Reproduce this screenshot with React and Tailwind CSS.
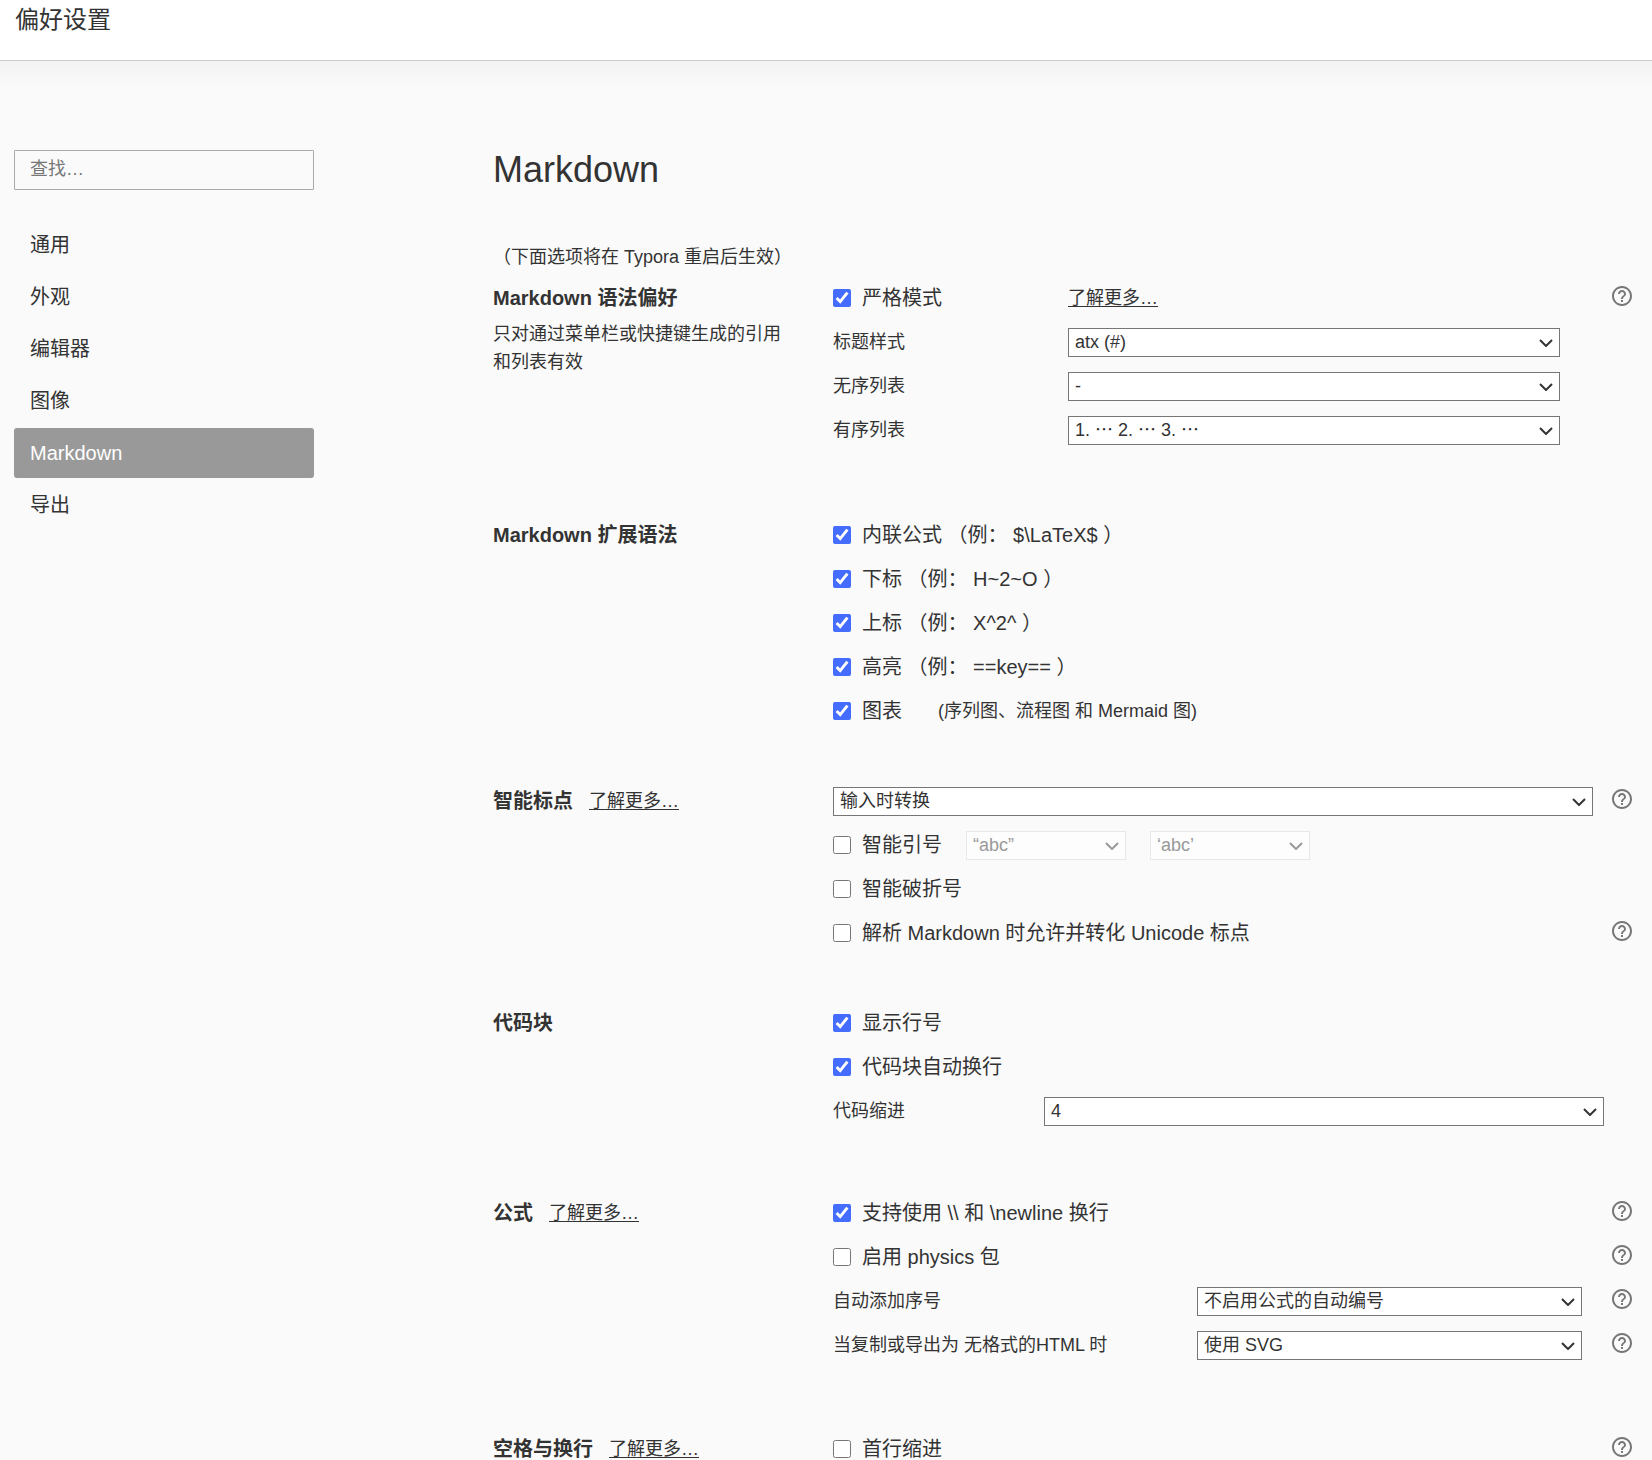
import React, { useState } from 'react';
import { MdHelpOutline } from 'react-icons/md';

const MENU = ['通用', '外观', '编辑器', '图像', 'Markdown', '导出'];

const HelpButton = ({ topic }) => (
  <button type="button" aria-label={`帮助：${topic}`} className="shrink-0 pb-1 text-[#777]">
    <MdHelpOutline className="size-6" />
  </button>
);

const MoreLink = () => (
  <a href="#more" className="text-[18px] font-normal underline underline-offset-2">了解更多…</a>
);

const Select = ({ id, label, options, disabled, className }) => (
  <div className={`relative ${className}`}>
    <select
      id={id}
      aria-label={label}
      disabled={disabled}
      className="block h-[29px] w-full appearance-none border border-[#767676] bg-white pb-px pl-1.5 pr-7 text-[18px] leading-[26px] text-[#333] disabled:border-[#e8e8e8] disabled:bg-[#fdfdfd] disabled:text-[#999]"
    >
      {options.map((o) => <option key={o}>{o}</option>)}
    </select>
    <svg
      viewBox="0 0 14 8"
      className={`pointer-events-none absolute right-[7px] top-[11px] h-2 w-3.5 ${disabled ? 'text-[#999]' : 'text-[#333]'}`}
    >
      <path d="M1 1l6 6 6-6" fill="none" stroke="currentColor" strokeWidth="2" />
    </svg>
  </div>
);

// Checkbox with its label, anything after it stays on the same line
const CheckRow = ({ id, label, checked = false, help, children }) => {
  const [on, setOn] = useState(checked);
  return (
    <div className="flex h-11 items-center">
      <input
        id={id}
        type="checkbox"
        checked={on}
        onChange={(e) => setOn(e.target.checked)}
        className="size-[18px] shrink-0 accent-[#446dff]"
      />
      <label htmlFor={id} className="ml-[11px] whitespace-nowrap text-[20px]">{label}</label>
      {children}
      {help && <div className="ml-auto flex"><HelpButton topic={label} /></div>}
    </div>
  );
};

const SelectRow = ({ id, label, labelWidth, selectClass, options, help }) => (
  <div className="flex h-11 items-center">
    <label htmlFor={id} className={`shrink-0 whitespace-nowrap text-[18px] ${labelWidth}`}>{label}</label>
    <Select id={id} options={options} className={`flex-1 ${selectClass}`} />
    {help && <HelpButton topic={label} />}
  </div>
);

const Section = ({ title, more, note, className = '', children }) => (
  <section className={`flex ${className}`}>
    <div className="w-[340px] shrink-0">
      <div className="flex h-11 items-center gap-4">
        <h2 className="text-[20px] font-bold">{title}</h2>
        {more && <MoreLink />}
      </div>
      {note && <p className="w-[300px] text-[18px] leading-7">{note}</p>}
    </div>
    <div className="min-w-0 flex-1">{children}</div>
  </section>
);

const Sidebar = () => {
  const [active, setActive] = useState('Markdown');
  return (
    <aside className="w-[300px] shrink-0">
      <input
        type="search"
        aria-label="查找"
        placeholder="查找…"
        className="block h-10 w-full rounded-[1px] border border-[#aaa] bg-transparent px-[15px] pb-px text-[18px] placeholder:text-[#777]"
      />
      <nav className="mt-[30px] flex flex-col gap-0.5">
        {MENU.map((item) => (
          <button
            key={item}
            type="button"
            onClick={() => setActive(item)}
            className={`h-[50px] rounded-[3px] px-4 text-left text-[20px] ${item === active ? 'bg-[#999] text-white' : ''}`}
          >
            {item}
          </button>
        ))}
      </nav>
    </aside>
  );
};

const App = () => (
  <div className="flex h-screen flex-col overflow-hidden bg-[#fafafa] font-['Liberation_Sans','Noto_Sans_CJK_SC',sans-serif] text-[#333]">
    <header className="h-[61px] shrink-0 border-b border-[#ccc] bg-white px-[15px]">
      <h1 className="text-[24px] leading-10">偏好设置</h1>
    </header>
    <div className="h-7 shrink-0 bg-linear-to-b from-[#f3f3f3] to-[#fafafa]" />

    <div className="flex pl-3.5 pr-[18px] pt-[61px]">
      <Sidebar />

      <main className="ml-[179px] min-w-0 flex-1">
        <h1 className="text-[36px] leading-10">Markdown</h1>
        <p className="mt-[54px] text-[18px] leading-[26px]">（下面选项将在 Typora 重启后生效）</p>

        <Section title="Markdown 语法偏好" note="只对通过菜单栏或快捷键生成的引用和列表有效" className="mt-1.5">
          <div className="flex items-center">
            <div className="w-[235px] shrink-0">
              <CheckRow id="strict" label="严格模式" checked />
            </div>
            <MoreLink />
            <div className="ml-auto flex"><HelpButton topic="严格模式" /></div>
          </div>
          <SelectRow id="heading" label="标题样式" options={['atx (#)', 'setext (===)']} labelWidth="w-[235px]" selectClass="mr-[74px]" />
          <SelectRow id="ul" label="无序列表" options={['-', '*', '+']} labelWidth="w-[235px]" selectClass="mr-[74px]" />
          <SelectRow id="ol" label="有序列表" options={['1. ⋯ 2. ⋯ 3. ⋯', '1) ⋯ 2) ⋯ 3) ⋯']} labelWidth="w-[235px]" selectClass="mr-[74px]" />
        </Section>

        <Section title="Markdown 扩展语法" className="mt-[61px]">
          <CheckRow id="math" label="内联公式 （例： $\LaTeX$ ）" checked />
          <CheckRow id="sub" label="下标 （例： H~2~O ）" checked />
          <CheckRow id="sup" label="上标 （例： X^2^ ）" checked />
          <CheckRow id="highlight" label="高亮 （例： ==key== ）" checked />
          <CheckRow id="diagram" label="图表" checked>
            <span className="ml-9 text-[18px]">(序列图、流程图 和 Mermaid 图)</span>
          </CheckRow>
        </Section>

        <Section title="智能标点" more className="mt-[46px]">
          <div className="flex h-11 items-center">
            <Select id="smart" label="智能标点" options={['输入时转换', '渲染时转换', '关闭']} className="mr-[17px] flex-1" />
            <HelpButton topic="智能标点" />
          </div>
          <CheckRow id="quotes" label="智能引号">
            <Select id="dquote" label="双引号" options={['“abc”', '«abc»']} disabled className="ml-6 w-40" />
            <Select id="squote" label="单引号" options={['‘abc’', '‹abc›']} disabled className="ml-6 w-40" />
          </CheckRow>
          <CheckRow id="dashes" label="智能破折号" />
          <CheckRow id="unicode" label="解析 Markdown 时允许并转化 Unicode 标点" help />
        </Section>

        <Section title="代码块" className="mt-[46px]">
          <CheckRow id="lines" label="显示行号" checked />
          <CheckRow id="wrap" label="代码块自动换行" checked />
          <SelectRow id="indent" label="代码缩进" options={['4', '2', '8']} labelWidth="w-[211px]" selectClass="mr-[30px]" />
        </Section>

        <Section title="公式" more className="mt-[58px]">
          <CheckRow id="newline" label="支持使用 \\ 和 \newline 换行" checked help />
          <CheckRow id="physics" label="启用 physics 包" help />
          <SelectRow id="numbering" label="自动添加序号" options={['不启用公式的自动编号', '为所有公式编号']} labelWidth="w-[364px]" selectClass="mr-7" help />
          <SelectRow id="export" label="当复制或导出为 无格式的HTML 时" options={['使用 SVG', '使用 TeX']} labelWidth="w-[364px]" selectClass="mr-7" help />
        </Section>

        <Section title="空格与换行" more className="mt-15">
          <CheckRow id="first-indent" label="首行缩进" help />
        </Section>
      </main>
    </div>
  </div>
);

export default App;
